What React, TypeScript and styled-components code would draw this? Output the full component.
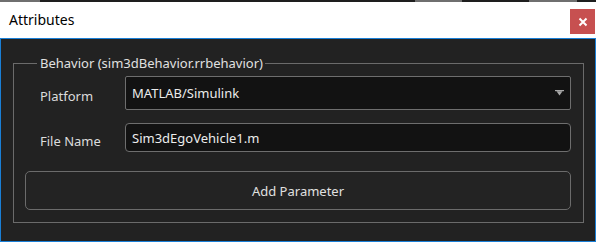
import React from "react";
import styled, { createGlobalStyle } from "styled-components";

const Global = createGlobalStyle`
  html, body { margin: 0; padding: 0; background: #1f1f1f; }
  * { box-sizing: border-box; }
`;

const Window = styled.div`
  width: 596px;
  height: 242px;
  display: flex;
  flex-direction: column;
  font-family: "Noto Sans", "Open Sans", sans-serif;
  overflow: hidden;
`;

const TopStrip = styled.div`
  height: 2px;
  background: #1e1e1e;
  flex: none;
  display: flex;
`;

const StripSeg = styled.div<{ $w: number; $lit?: boolean }>`
  width: ${(p) => p.$w}px;
  height: 100%;
  flex: none;
  background: ${(p) => (p.$lit ? "#6f6f6f" : "#1e1e1e")};
`;

const TitleBar = styled.div`
  height: 36px;
  flex: none;
  background: #ffffff;
  display: flex;
  align-items: flex-start;
  justify-content: space-between;
  padding: 0 1px 0 9px;
`;

const Title = styled.div`
  font-size: 14px;
  color: #000;
  line-height: 20px;
  margin-top: 8px;
`;

const CloseButton = styled.div`
  width: 25px;
  height: 25px;
  margin-top: 7px;
  background: #c75050;
  display: flex;
  align-items: center;
  justify-content: center;
`;

const Content = styled.div`
  flex: 1;
  background: #222222;
  border: 1px solid #1a7fd6;
  padding: 16px 11px 18px 12px;
  display: flex;
`;

const Group = styled.fieldset`
  flex: 1;
  margin: 0;
  border: 1px solid #6b6b6b;
  padding: 5px 12px 11px 11px;
  display: flex;
  flex-direction: column;
  min-width: 0;
`;

const Legend = styled.legend`
  font-size: 13px;
  color: #e0e0e0;
  padding: 0 2px 0 3px;
  margin-left: 12px;
  line-height: 16px;
`;

const Row = styled.div<{ $gap: number }>`
  display: grid;
  grid-template-columns: 100px 1fr;
  align-items: center;
  margin-bottom: ${(p) => p.$gap}px;
`;

const Label = styled.div`
  font-size: 13px;
  color: #dcdcdc;
  padding-left: 15px;
  padding-top: 6px;
`;

const Combo = styled.div`
  height: 34px;
  background: #121212;
  border: 1px solid #6e6e6e;
  border-radius: 2px;
  display: flex;
  align-items: center;
  justify-content: space-between;
  padding: 0 6px 0 6px;
  font-size: 13px;
  color: #ececec;
`;

const TextInput = styled.div`
  height: 29px;
  background: #121212;
  border: 1px solid #6e6e6e;
  border-radius: 4px;
  display: flex;
  align-items: center;
  padding: 0 6px;
  font-size: 13px;
  color: #ececec;
`;

const Button = styled.div`
  height: 39px;
  border: 1px solid #6b6b6b;
  border-radius: 5px;
  background: #232323;
  display: flex;
  align-items: center;
  justify-content: center;
  font-size: 13px;
  color: #e0e0e0;
`;

export default function App() {
  return (
    <>
      <Global />
      <Window>
        <TopStrip>
          <StripSeg $w={40} $lit />
          <StripSeg $w={375} />
          <StripSeg $w={47} $lit />
          <StripSeg $w={67} />
          <StripSeg $w={48} $lit />
        </TopStrip>
        <TitleBar>
          <Title>Attributes</Title>
          <CloseButton>
            <svg width="10" height="10" viewBox="0 0 10 10">
              <path d="M1.5 1.5 L8.5 8.5 M8.5 1.5 L1.5 8.5" stroke="#fff" strokeWidth="2" />
            </svg>
          </CloseButton>
        </TitleBar>
        <Content>
          <Group>
            <Legend>Behavior (sim3dBehavior.rrbehavior)</Legend>
            <Row $gap={13}>
              <Label>Platform</Label>
              <Combo>
                <span>MATLAB/Simulink</span>
                <svg width="9" height="6" viewBox="0 0 9 6">
                  <rect x="0" y="0" width="9" height="1.2" fill="#a8a8a8" />
                  <path d="M1.5 1.2 L7.5 1.2 L4.5 5.5 Z" fill="#a8a8a8" />
                </svg>
              </Combo>
            </Row>
            <Row $gap={19}>
              <Label>File Name</Label>
              <TextInput>Sim3dEgoVehicle1.m</TextInput>
            </Row>
            <Button>Add Parameter</Button>
          </Group>
        </Content>
      </Window>
    </>
  );
}
